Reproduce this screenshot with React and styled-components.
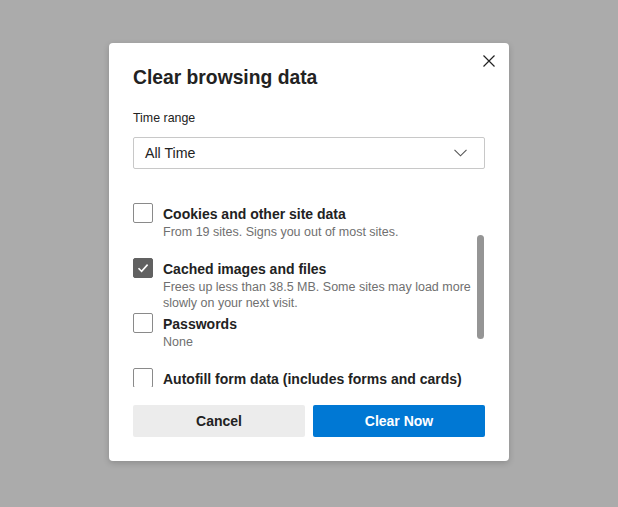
import React from "react";
import styled, { createGlobalStyle } from "styled-components";

const Global = createGlobalStyle`
  html, body {
    margin: 0;
    padding: 0;
    background: #ababab;
  }
  body {
    font-family: "Liberation Sans", Arial, sans-serif;
    color: #1b1b1b;
  }
`;

const items = [
  {
    title: "Cookies and other site data",
    sub: "From 19 sites. Signs you out of most sites.",
    checked: false,
  },
  {
    title: "Cached images and files",
    sub: "Frees up less than 38.5 MB. Some sites may load more slowly on your next visit.",
    checked: true,
  },
  { title: "Passwords", sub: "None", checked: false },
  { title: "Autofill form data (includes forms and cards)", sub: "", checked: false },
];

const App = () => {
  return (
    <>
      <Global />
      <Page>
        <Dialog>
          <Close aria-label="Close">
            <svg width="12" height="12" viewBox="0 0 12 12">
              <path d="M0.5 0.5 L11.5 11.5 M11.5 0.5 L0.5 11.5" stroke="#222" strokeWidth="1.2" fill="none" />
            </svg>
          </Close>
          <Title>Clear browsing data</Title>
          <Label>Time range</Label>
          <Select>
            <span>All Time</span>
            <svg width="13" height="8" viewBox="0 0 13 8">
              <path d="M0.5 0.8 L6.5 6.8 L12.5 0.8" stroke="#555" strokeWidth="1.1" fill="none" />
            </svg>
          </Select>
          <List>
            {items.map((it) => (
              <Item key={it.title}>
                <Box $checked={it.checked}>
                  {it.checked && (
                    <svg width="14" height="14" viewBox="0 0 14 14">
                      <path d="M2.5 7.3 L5.6 10.3 L11.6 3.6" stroke="#fff" strokeWidth="1.6" fill="none" />
                    </svg>
                  )}
                </Box>
                <Text>
                  <ItemTitle>{it.title}</ItemTitle>
                  {it.sub && <Sub>{it.sub}</Sub>}
                </Text>
              </Item>
            ))}
            <Scrollbar />
          </List>
          <Buttons>
            <Button>Cancel</Button>
            <Button $primary>Clear Now</Button>
          </Buttons>
        </Dialog>
      </Page>
    </>
  );
};

const Page = styled.div`
  display: flex;
  justify-content: center;
  align-items: flex-start;
  padding-top: 43px;
  height: 507px;
  box-sizing: border-box;
`;

const Dialog = styled.div`
  position: relative;
  width: 400px;
  box-sizing: border-box;
  padding: 24px 24px 24px;
  background: #fff;
  border-radius: 4px;
  box-shadow: 0 2px 6px rgba(0, 0, 0, 0.18);
`;

const Close = styled.button`
  position: absolute;
  top: 12px;
  right: 14px;
  width: 12px;
  height: 12px;
  padding: 0;
  border: none;
  background: none;
  display: flex;
`;

const Title = styled.h1`
  margin: 0;
  font-size: 19.3px;
  line-height: 22px;
  font-weight: 700;
  color: #222;
`;

const Label = styled.div`
  margin-top: 21px;
  font-size: 12.4px;
  line-height: 16px;
  color: #222;
`;

const Select = styled.div`
  margin-top: 11px;
  height: 32px;
  box-sizing: border-box;
  border: 1px solid #c8c8c8;
  border-radius: 2px;
  display: flex;
  align-items: center;
  justify-content: space-between;
  padding: 0 17px 0 11px;
  font-size: 14.2px;
  color: #222;
`;

const List = styled.div`
  position: relative;
  height: 218px;
  overflow: hidden;
  padding-top: 35px;
  box-sizing: border-box;
`;

const Item = styled.div`
  display: flex;
  gap: 10px;
  height: 55px;
`;

const Box = styled.div`
  flex: none;
  width: 20px;
  height: 20px;
  box-sizing: border-box;
  border-radius: 2px;
  border: 1px solid ${(p) => (p.$checked ? "#616161" : "#8a8a8a")};
  background: ${(p) => (p.$checked ? "#616161" : "#fff")};
  display: flex;
  align-items: center;
  justify-content: center;
  margin-top: -1px;
`;

const Text = styled.div`
  display: flex;
  flex-direction: column;
  padding-right: 10px;
`;

const ItemTitle = styled.div`
  font-size: 14px;
  line-height: 20px;
  font-weight: 700;
  color: #222;
`;

const Sub = styled.div`
  font-size: 12.5px;
  line-height: 16px;
  color: #707070;
`;

const Scrollbar = styled.div`
  position: absolute;
  top: 66px;
  right: 1px;
  width: 7px;
  height: 104px;
  border-radius: 4px;
  background: #959595;
`;

const Buttons = styled.div`
  margin-top: 18px;
  display: grid;
  grid-template-columns: 1fr 1fr;
  gap: 8px;
`;

const Button = styled.button`
  height: 32px;
  border: none;
  border-radius: 2px;
  font-family: inherit;
  font-size: 14px;
  font-weight: 700;
  background: ${(p) => (p.$primary ? "#0078d4" : "#ececec")};
  color: ${(p) => (p.$primary ? "#fff" : "#222")};
`;

export default App;
